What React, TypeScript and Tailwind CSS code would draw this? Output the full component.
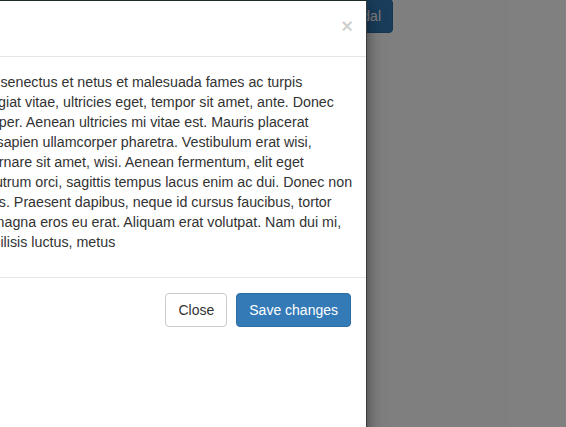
const lines = [
  'Pellentesque habitant morbi tristique senectus et netus et malesuada fames ac turpis',
  'egestas. Vestibulum tortor quam, feugiat vitae, ultricies eget, tempor sit amet, ante. Donec',
  'eu libero sit amet quam egestas semper. Aenean ultricies mi vitae est. Mauris placerat',
  'eleifend leo. Quisque sit amet est et sapien ullamcorper pharetra. Vestibulum erat wisi,',
  'condimentum sed, commodo vitae, ornare sit amet, wisi. Aenean fermentum, elit eget',
  'tincidunt condimentum, eros ipsum rutrum orci, sagittis tempus lacus enim ac dui. Donec non',
  'enim in turpis pulvinar facilisis. Ut felis. Praesent dapibus, neque id cursus faucibus, tortor',
  'neque egestas augue, eu vulputate magna eros eu erat. Aliquam erat volutpat. Nam dui mi,',
  'tincidunt quis, accumsan porttitor, facilisis luctus, metus',
];

const App = () => {
  return (
    <div className="relative h-[427px] w-[566px] overflow-hidden bg-white font-['Liberation_Sans',Arial,sans-serif] text-[14px] text-[#333]">
      {/* page behind the backdrop */}
      <div className="flex justify-end pr-[173px]">
        <button className="-mt-px h-[34px] rounded-[4px] border border-[#2e6da4] bg-[#337ab7] pr-[11px] pl-[13px] text-white">
          Launch demo modal
        </button>
      </div>

      {/* backdrop */}
      <div className="absolute inset-0 bg-black/50" />

      {/* modal */}
      <div className="absolute top-0 left-[-246px] flex h-[440px] w-[613px] flex-col border border-t-[#1c2a2c] border-r-[#3a3a3a] border-black/20 bg-white shadow-[0_5px_15px_rgba(0,0,0,0.5)]">
        <div className="flex items-center justify-between border-b border-[#e5e5e5] p-[15px]">
          <h4 className="text-[18px] leading-[25px] font-medium">Modal title</h4>
          <button className="-mt-[6px] -mr-[2px] text-[20px] leading-none font-bold text-black/20">×</button>
        </div>
        <div className="p-[15px]">
          <p className="-ml-[4px] mb-[10px] text-[14.25px] leading-[20px]">
            {lines.map((l, i) => (
              <span key={i} className="block whitespace-nowrap">{l}</span>
            ))}
          </p>
        </div>
        <div className="flex justify-end gap-[9px] border-t border-[#e5e5e5] p-[15px]">
          <button className="h-[34px] rounded-[4px] border border-[#ccc] bg-white px-[12px] text-[#333]">Close</button>
          <button className="h-[34px] rounded-[4px] border border-[#2e6da4] bg-[#337ab7] px-[12px] text-white">Save changes</button>
        </div>
      </div>
    </div>
  );
};

export default App;
